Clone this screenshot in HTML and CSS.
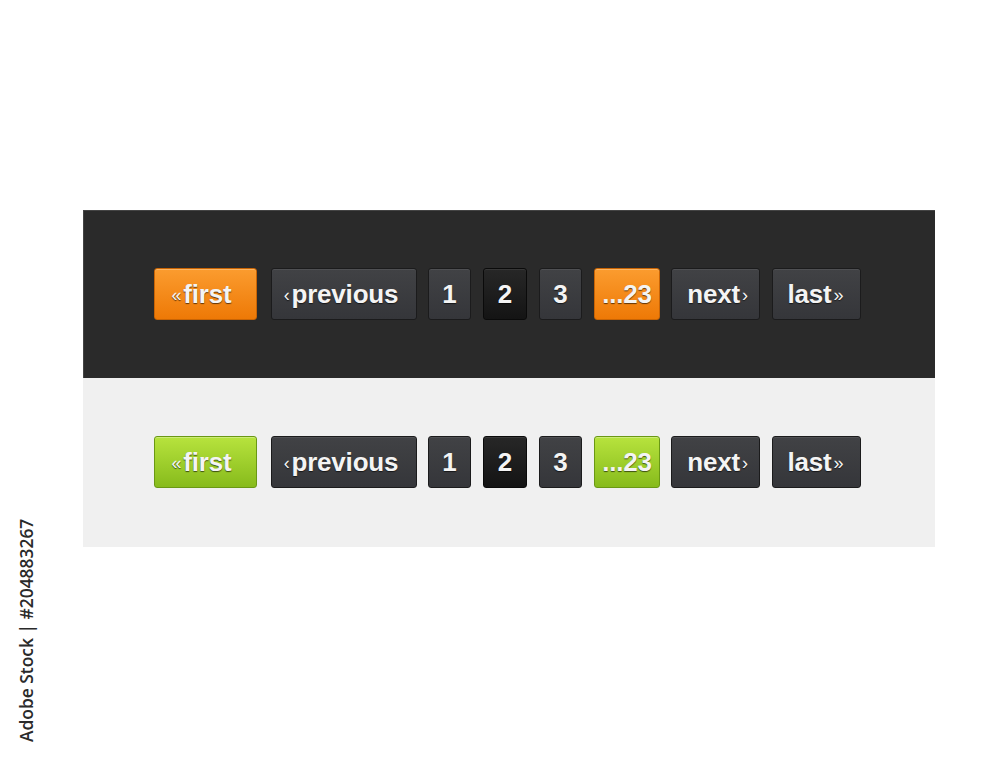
FILE: index.html
```html
<!DOCTYPE html>
<html>
<head>
<meta charset="utf-8">
<link rel="stylesheet" href="styles.css">
</head>
<body>
<div class="stage">
  <section class="panel panel-dark">
    <nav class="pager">
      <a class="btn accent-orange w-first"><span class="ch">«</span>first</a>
      <a class="btn w-prev"><span class="ch">‹</span>previous</a>
      <a class="btn w-num">1</a>
      <a class="btn w-num w-wide active">2</a>
      <a class="btn w-num">3</a>
      <a class="btn accent-orange w-more">...23</a>
      <a class="btn w-next">next<span class="ch">›</span></a>
      <a class="btn w-last">last<span class="ch">»</span></a>
    </nav>
  </section>
  <section class="panel panel-light">
    <nav class="pager">
      <a class="btn accent-green w-first"><span class="ch">«</span>first</a>
      <a class="btn w-prev"><span class="ch">‹</span>previous</a>
      <a class="btn w-num">1</a>
      <a class="btn w-num w-wide active">2</a>
      <a class="btn w-num">3</a>
      <a class="btn accent-green w-more">...23</a>
      <a class="btn w-next">next<span class="ch">›</span></a>
      <a class="btn w-last">last<span class="ch">»</span></a>
    </nav>
  </section>
</div>
<div class="credit">Adobe Stock | #204883267</div>
</body>
</html>
```
FILE: styles.css
```css
html, body {
  margin: 0;
  padding: 0;
  background: #ffffff;
}
body {
  width: 1000px;
  height: 758px;
  overflow: hidden;
  position: relative;
  font-family: "Liberation Sans", Arial, sans-serif;
}
.stage {
  margin: 210px 0 0 83px;
  width: 852px;
}
.panel {
  box-sizing: border-box;
  padding: 58px 0 0 71px;
}
.panel-dark {
  height: 168px;
  background: #2a2a2a;
  border-top: 1px solid #444;
  border-left: 1px solid #444;
  padding-top: 57px;
  padding-left: 70px;
}
.panel-light {
  height: 169px;
  background: #f0f0f0;
}
.pager {
  display: flex;
  align-items: center;
}
.btn {
  box-sizing: border-box;
  height: 52px;
  display: flex;
  align-items: center;
  justify-content: center;
  margin-right: 12px;
  border-radius: 3px;
  border: 1px solid #1b1b1c;
  background: linear-gradient(#414245, #35363a);
  box-shadow: inset 0 1px 0 rgba(255,255,255,0.08);
  color: #f4f4f4;
  font-weight: bold;
  font-size: 26px;
  letter-spacing: -0.2px;
  text-shadow: 0 1px 1px rgba(0,0,0,0.6);
  text-decoration: none;
}
.btn .ch {
  font-size: 18px;
  font-weight: normal;
  margin: 2px 2px 0 2px;
}
.btn.active {
  background: linear-gradient(#272727, #141414);
  border-color: #0a0a0a;
}
.accent-orange {
  background: linear-gradient(#fb9c2f, #ee7906);
  border-color: #c96404;
  box-shadow: inset 0 1px 0 rgba(255,255,255,0.25);
}
.accent-green {
  background: linear-gradient(#b7e33d, #87bb1c);
  border-color: #6a9814;
  box-shadow: inset 0 1px 0 rgba(255,255,255,0.3);
}
.w-first { width: 103px; padding-right: 10px; margin-right: 14px; }
.w-prev { width: 146px; padding-right: 8px; margin-right: 11px; }
.w-num { width: 43px; }
.w-wide { width: 44px; }
.w-more { width: 66px; margin-right: 11px; }
.w-next { width: 89px; padding-left: 6px; }
.w-last { width: 89px; }
.credit {
  position: absolute;
  left: 14px;
  top: 517px;
  height: 227px;
  writing-mode: vertical-rl;
  transform: rotate(180deg);
  font-family: "Open Sans", "Liberation Sans", sans-serif;
  font-size: 17.4px;
  font-weight: 600;
  color: #2a2a2a;
  text-align: center;
  white-space: nowrap;
}
```
